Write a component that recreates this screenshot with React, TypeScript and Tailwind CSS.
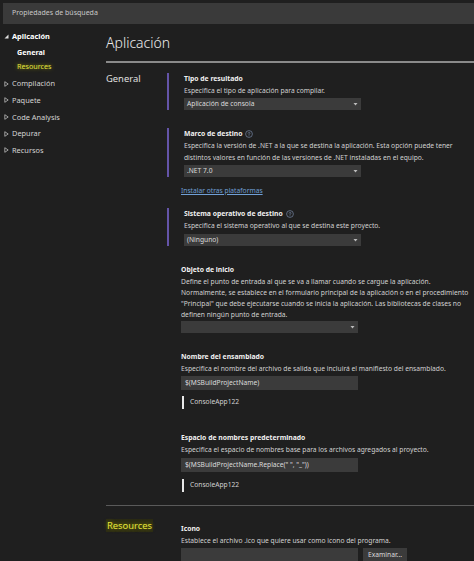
import React from "react";

const font = { fontFamily: '"Noto Sans", "Open Sans", sans-serif' };

function Caret() {
  return (
    <svg width="5" height="4" viewBox="0 0 5 4" className="shrink-0">
      <path d="M0.5 1 L4.5 1 L2.5 3.5 Z" fill="#bdbdbd" />
    </svg>
  );
}

function Help() {
  return (
    <svg width="8" height="8" viewBox="0 0 16 16" className="ml-[3px] inline-block">
      <circle cx="8" cy="8" r="6.8" fill="none" stroke="#7d8fb0" strokeWidth="1.3" />
      <path d="M6 6.2 C6 4.6 10 4.4 10 6.3 C10 7.6 8 7.7 8 9.3" fill="none" stroke="#7d8fb0" strokeWidth="1.3" strokeLinecap="round" />
      <circle cx="8" cy="11.4" r="0.9" fill="#7d8fb0" />
    </svg>
  );
}

function Select({ value, w = "w-[177px]" }: { value: string; w?: string }) {
  return (
    <div className={`${w} h-[12px] bg-[#3b3b3b] flex items-center justify-between pl-[3px] pr-[3px] text-[6.7px] text-[#dcdcdc]`}>
      <span>{value}</span>
      <Caret />
    </div>
  );
}

function Title({ children }: { children: React.ReactNode }) {
  return <div className="h-[12px] leading-[12px] text-[6.8px] font-bold text-[#f0f0f0] flex items-center">{children}</div>;
}

function Desc({ lines }: { lines: string[] }) {
  return (
    <div className="text-[6.7px] text-[#d2d2d2]">
      {lines.map((l, i) => (
        <div key={i} className="h-[12px] leading-[12px] whitespace-nowrap">{l}</div>
      ))}
    </div>
  );
}

function Barred({ children, className = "" }: { children: React.ReactNode; className?: string }) {
  return (
    <div className={`-ml-[14px] border-l-2 border-[#6454a8] pl-[15px] ${className}`}>{children}</div>
  );
}

function Eval({ text }: { text: string }) {
  return (
    <div className="flex items-center h-[13px] ml-[1px]">
      <div className="w-[2px] h-[13px] bg-[#e8e8e8]" />
      <span className="ml-[6px] text-[6.7px] text-[#d2d2d2]">{text}</span>
    </div>
  );
}

function NavTop({ label, open = false }: { label: string; open?: boolean }) {
  return (
    <div className="h-[16.6px] flex items-center pl-[4px] text-[7.4px]">
      {open ? (
        <svg width="5" height="5" viewBox="0 0 5 5" className="mr-[3px]">
          <path d="M4.5 0.5 L4.5 4.5 L0.5 4.5 Z" fill="#e0e0e0" />
        </svg>
      ) : (
        <svg width="5" height="6" viewBox="0 0 5 6" className="mr-[3px]">
          <path d="M0.8 0.7 L4.2 3 L0.8 5.3 Z" fill="none" stroke="#bdbdbd" strokeWidth="0.8" />
        </svg>
      )}
      <span className={open ? "font-bold text-white" : "text-[#d4d4d4]"}>{label}</span>
    </div>
  );
}

export default function App() {
  return (
    <div style={font} className="w-[474px] h-[561px] bg-[#1f1f1f] overflow-hidden flex flex-col">
      <div className="pt-[3px] pl-[3px]">
        <div className="h-[21px] bg-[#3a3a3a] flex items-center pl-[9px] text-[7px] text-[#c9c9c9]">
          Propiedades de búsqueda
        </div>
      </div>
      <div className="flex flex-1">
        {/* nav */}
        <div className="w-[97px] pt-[4px] shrink-0">
          <NavTop label="Aplicación" open />
          <div className="h-[15px] flex items-center pl-[17px] text-[7.2px] font-bold text-white">General</div>
          <div className="h-[13px] flex items-center pl-[17px] text-[7.2px] text-[#e2e23c] [text-shadow:0_0_4px_rgba(200,200,0,0.7)]">Resources</div>
          <div className="h-[3px]" />
          <NavTop label="Compilación" />
          <NavTop label="Paquete" />
          <NavTop label="Code Analysis" />
          <NavTop label="Depurar" />
          <NavTop label="Recursos" />
        </div>
        {/* main */}
        <div className="flex-1 pl-[9px]">
          <div className="h-[37px] pt-[9px] text-[14px] font-light text-[#ececec] leading-[20px]">Aplicación</div>
          <div className="h-[2px] bg-[#8a8a8a]" />
          <div className="flex">
            <div className="w-[75px] shrink-0 pt-[9px] text-[9.4px] text-[#e0e0e0]">General</div>
            <div className="flex-1 pt-[10px]">
              <Barred>
                <Title>Tipo de resultado</Title>
                <Desc lines={["Especifica el tipo de aplicación para compilar."]} />
                <div className="mt-[1px]"><Select value="Aplicación de consola" /></div>
              </Barred>
              <Barred className="mt-[18px]">
                <Title>Marco de destino<Help /></Title>
                <Desc
                  lines={[
                    "Especifica la versión de .NET a la que se destina la aplicación. Esta opción puede tener",
                    "distintos valores en función de las versiones de .NET instaladas en el equipo.",
                  ]}
                />
                <div className="mt-[1px]"><Select value=".NET 7.0" /></div>
              </Barred>
              <div className="mt-[8px] h-[12px] leading-[12px] text-[6.7px] text-[#6f9fd6] underline">Instalar otras plataformas</div>
              <Barred className="mt-[11px]">
                <Title>Sistema operativo de destino<Help /></Title>
                <Desc lines={["Especifica el sistema operativo al que se destina este proyecto."]} />
                <div className="mt-[2px]"><Select value="(Ninguno)" /></div>
              </Barred>
              <div className="mt-[18px]">
                <Title>Objeto de inicio</Title>
                <div className="text-[6.7px] text-[#d2d2d2]">
                  {[
                    "Define el punto de entrada al que se va a llamar cuando se cargue la aplicación.",
                    "Normalmente, se establece en el formulario principal de la aplicación o en el procedimiento",
                    "\"Principal\" que debe ejecutarse cuando se inicia la aplicación. Las bibliotecas de clases no",
                    "definen ningún punto de entrada.",
                  ].map((l, i) => (
                    <div key={i} className="h-[11px] leading-[11px] whitespace-nowrap">{l}</div>
                  ))}
                </div>
                <div className="mt-[1px]"><Select value="" /></div>
              </div>
              <div className="mt-[18px]">
                <Title>Nombre del ensamblado</Title>
                <Desc lines={["Especifica el nombre del archivo de salida que incluirá el manifiesto del ensamblado."]} />
                <div className="mt-[1px] w-[177px] h-[14px] bg-[#3b3b3b] flex items-center pl-[4px] text-[6.7px] text-[#dcdcdc]">$(MSBuildProjectName)</div>
                <div className="mt-[6px]"><Eval text="ConsoleApp122" /></div>
              </div>
              <div className="mt-[23px]">
                <Title>Espacio de nombres predeterminado</Title>
                <Desc lines={["Especifica el espacio de nombres base para los archivos agregados al proyecto."]} />
                <div className="mt-[2px] w-[177px] h-[14px] bg-[#3b3b3b] flex items-center pl-[4px] text-[6.7px] text-[#dcdcdc]">$(MSBuildProjectName.Replace(" ", "_"))</div>
                <div className="mt-[7px]"><Eval text="ConsoleApp122" /></div>
              </div>
            </div>
          </div>
          <div className="mt-[13px] h-[1px] bg-[#5a5a5a]" />
          <div className="flex">
            <div className="w-[75px] shrink-0 pt-[5px]">
              <span className="text-[9.4px] text-[#e4e43a] bg-[#2b2b14] px-[1px] [text-shadow:0_0_4px_rgba(200,200,0,0.6)]">Resources</span>
            </div>
            <div className="flex-1 pt-[17px]">
              <Title>Icono</Title>
              <Desc lines={["Establece el archivo .ico que quiere usar como icono del programa."]} />
              <div className="mt-[1px] flex gap-[5px]">
                <div className="w-[177px] h-[14px] bg-[#3b3b3b]" />
                <div className="w-[44px] h-[14px] bg-[#3b3b3b] flex items-center justify-center text-[6.7px] text-[#dcdcdc]">Examinar...</div>
              </div>
            </div>
          </div>
        </div>
      </div>
    </div>
  );
}
